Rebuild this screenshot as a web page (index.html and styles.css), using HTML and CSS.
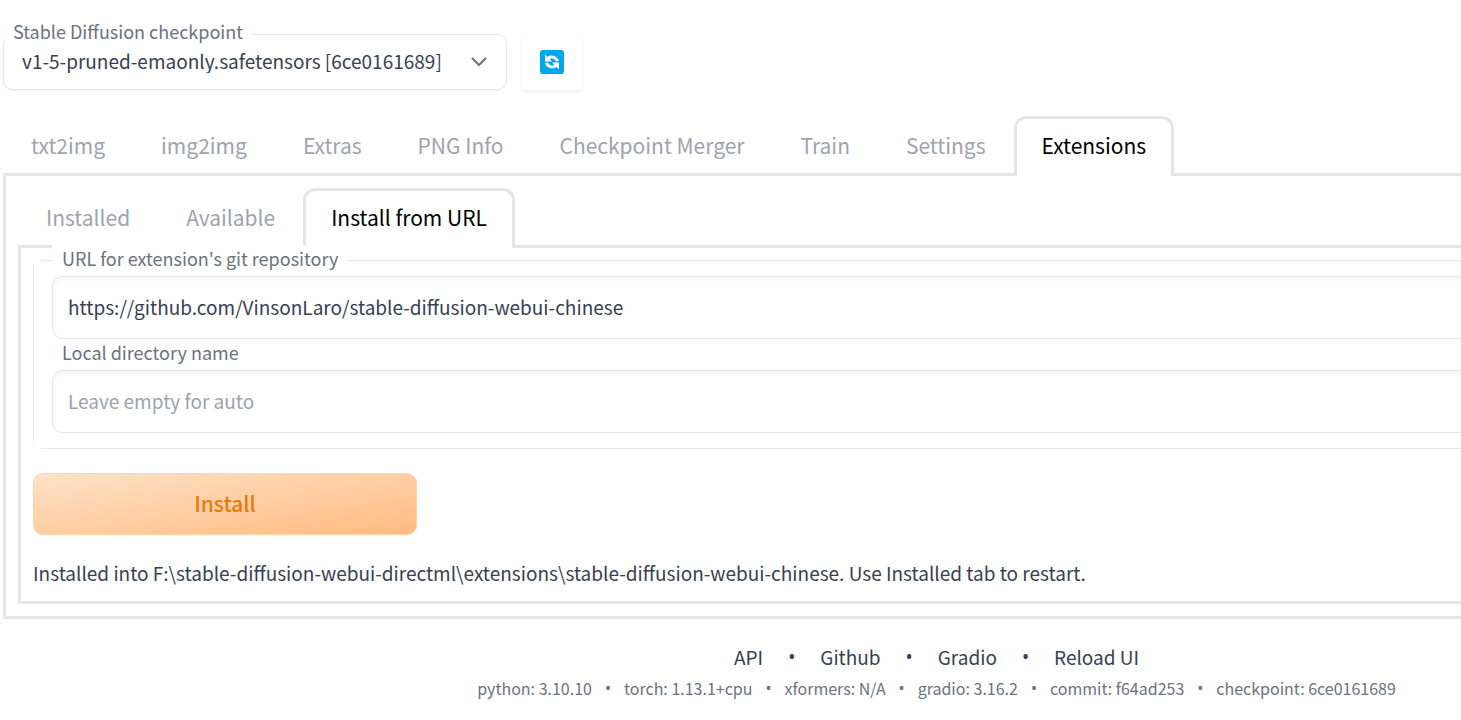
FILE: index.html
```html
<!DOCTYPE html>
<html lang="en">
  <head>
    <meta charset="utf-8" />
    <title>Stable Diffusion</title>
    <link rel="stylesheet" href="styles.css">
  </head>
  <body>
    <div class="app">
      <div class="quicksettings">
        <div class="checkpoint">
          <label class="block-label" for="checkpoint">Stable Diffusion checkpoint</label>
          <div class="select-wrap">
            <select id="checkpoint">
              <option>v1-5-pruned-emaonly.safetensors [6ce0161689]</option>
            </select>
            <svg class="chevron" viewBox="0 0 18 18" aria-hidden="true">
              <path d="M2 5l7 7 7-7" />
            </svg>
          </div>
        </div>
        <button class="refresh-btn" aria-label="Refresh">
          <svg viewBox="0 0 24 24" aria-hidden="true">
            <rect width="24" height="24" rx="3" fill="#00a6ed" />
            <path d="M8 8.200C11.500 5.800 16.500 7.200 17.400 11.300" class="arrow-line" />
            <path d="M16 15.800C12.500 18.200 7.500 16.800 6.600 12.700" class="arrow-line" />
            <path d="M5 4.500v7h7z" fill="#fff" />
            <path d="M19 19.500v-7h-7z" fill="#fff" />
          </svg>
        </button>
      </div>

      <div class="tab-nav" role="tablist">
        <button class="tab" role="tab">txt2img</button>
        <button class="tab" role="tab">img2img</button>
        <button class="tab" role="tab">Extras</button>
        <button class="tab" role="tab">PNG Info</button>
        <button class="tab" role="tab">Checkpoint Merger</button>
        <button class="tab" role="tab">Train</button>
        <button class="tab" role="tab">Settings</button>
        <button class="tab selected" role="tab" aria-selected="true">Extensions</button>
      </div>
      <div class="panel">
        <div class="tab-nav" role="tablist">
          <button class="tab" role="tab">Installed</button>
          <button class="tab" role="tab">Available</button>
          <button class="tab selected" role="tab" aria-selected="true">Install from URL</button>
        </div>
        <div class="panel inner-panel">
          <div class="form">
            <label class="block-label url-label" for="repo-url">URL for extension's git repository</label>
            <input class="textbox" id="repo-url" type="text" value="https://github.com/VinsonLaro/stable-diffusion-webui-chinese" />
            <label class="block-label" for="dir-name">Local directory name</label>
            <input class="textbox" id="dir-name" type="text" placeholder="Leave empty for auto" />
          </div>
          <button class="install-btn">Install</button>
          <p class="result">Installed into F:\stable-diffusion-webui-directml\extensions\stable-diffusion-webui-chinese. Use Installed tab to restart.</p>
        </div>
      </div>

      <footer>
        <div class="links">
          <a href="#">API</a>
          <span class="dot">•</span>
          <a href="#">Github</a>
          <span class="dot">•</span>
          <a href="#">Gradio</a>
          <span class="dot">•</span>
          <a href="#">Reload UI</a>
        </div>
        <div class="versions">
          <span>python: 3.10.10</span>
          <span class="dot">•</span>
          <span>torch: 1.13.1+cpu</span>
          <span class="dot">•</span>
          <span>xformers: N/A</span>
          <span class="dot">•</span>
          <span>gradio: 3.16.2</span>
          <span class="dot">•</span>
          <span>commit: f64ad253</span>
          <span class="dot">•</span>
          <span>checkpoint: 6ce0161689</span>
        </div>
      </footer>
    </div>
  </body>
</html>
```
FILE: styles.css
```css
* {
  box-sizing: border-box;
}
body {
  margin: 0;
  overflow-x: hidden;
  background-color: #fff;
  color: #374151;
  font-family: "Noto Sans CJK SC", "Noto Sans", sans-serif;
  font-size: 19px;
  line-height: 24px;
}
button,
input,
select {
  font: inherit;
  color: inherit;
}

/* wider than the window, the right side runs off screen */
.app {
  width: 128vw;
  padding: 19px 0 0 3px;
}

.block-label {
  display: block;
  width: fit-content;
  padding: 0 8px;
  background-color: #fff;
  color: #6b7280;
  font-size: 18px;
}

/* checkpoint row */
.quicksettings {
  display: flex;
  align-items: flex-end;
  gap: 15px;
}
.checkpoint {
  width: 504px;
}
.checkpoint .block-label {
  position: relative;
  z-index: 1;
  margin-bottom: -9px;
  margin-left: 2px;
}
.select-wrap {
  display: flex;
  align-items: center;
}
.select-wrap select {
  flex: 1;
  height: 56px;
  padding: 0 48px 2px 18px;
  appearance: none;
  border: 1px solid #e5e7eb;
  border-radius: 10px;
  background-color: #fff;
  box-shadow: 0 1px 2px rgba(0, 0, 0, 0.05);
}
.chevron {
  width: 18px;
  height: 18px;
  margin-left: -37px;
  margin-right: 19px;
  fill: none;
  stroke: #6b7280;
  stroke-width: 2;
  pointer-events: none;
}
.refresh-btn {
  display: flex;
  align-items: center;
  justify-content: center;
  width: 60px;
  height: 56px;
  padding: 0;
  border: none;
  background-color: #fff;
  box-shadow: 0 3px 3px rgba(0, 0, 0, 0.05);
}
.refresh-btn svg {
  width: 24px;
  height: 24px;
}
.arrow-line {
  fill: none;
  stroke: #fff;
  stroke-width: 3;
}

/* tabs */
.tab-nav {
  display: flex;
  margin-bottom: -3px;
}
.quicksettings + .tab-nav {
  margin-top: 26px;
}
.tab {
  height: 60px;
  padding: 0 25px 6px;
  border: 3px solid transparent;
  border-bottom: none;
  border-radius: 12px 12px 0 0;
  background: none;
  color: #a0a3ad;
  font-size: 21px;
}
.tab.selected {
  position: relative;
  border-color: #e5e6e8;
  background-color: #fff;
  color: #000;
}
.panel {
  padding: 12px;
  border: 3px solid #e5e6e8;
}

/* install from url */
.inner-panel {
  padding-top: 0;
  padding-bottom: 16px;
}
/* border sides are drawn without the corners */
.form {
  margin-bottom: 24px;
  padding: 0 19px 16px;
  background:
    linear-gradient(#e5e7eb, #e5e7eb) 8px 15px / 100% 1px no-repeat,
    linear-gradient(#e5e7eb, #e5e7eb) 8px 100% / 100% 1px no-repeat,
    linear-gradient(#e5e7eb, #e5e7eb) 0 calc(100% - 8px) / 1px calc(100% - 28px) no-repeat;
}
.form .block-label {
  padding: 1px 10px 6px;
}
.form .url-label {
  position: relative;
  margin-top: -3px;
}
.textbox {
  display: block;
  width: 100%;
  height: 63px;
  padding: 0 15px 2px;
  border: 1px solid #e5e7eb;
  border-radius: 10px;
  background-color: #fff;
  box-shadow: inset 0 2px 4px rgba(0, 0, 0, 0.05);
}
.textbox::placeholder {
  color: #9ca3af;
}
.install-btn {
  display: block;
  width: 384px;
  height: 62px;
  padding-bottom: 4px;
  border: 1px solid #fed7aa;
  border-radius: 10px;
  background: linear-gradient(to bottom right, #ffe2c8, #ffbb80);
  box-shadow: 0 1px 2px rgba(0, 0, 0, 0.05);
  color: #ea7a0c;
  font-size: 21px;
  font-weight: 500;
}
.result {
  margin: 26px 0 0;
}

footer {
  margin-top: 26px;
}
.links,
.versions {
  display: flex;
  justify-content: center;
}
.links {
  gap: 25px;
}
.links a {
  color: inherit;
  text-decoration: none;
}
.versions {
  gap: 13px;
  margin-top: 7px;
  color: #6b7280;
  font-size: 16px;
}
.dot {
  font-family: "Noto Sans", sans-serif;
}
```
